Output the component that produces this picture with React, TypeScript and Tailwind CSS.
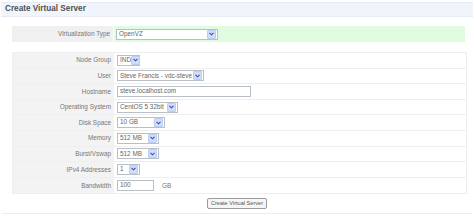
import React from 'react';

function Arrow() {
  return (
    <span className="flex h-[9px] w-[9px] shrink-0 items-center justify-center rounded-[1px] border border-[#bccdf2] bg-[#cfdcfb]">
      <svg width="5" height="4" viewBox="0 0 5 4">
        <path d="M0.5 0.8 L2.5 2.8 L4.5 0.8" stroke="#3550a8" strokeWidth="1.1" fill="none" />
      </svg>
    </span>
  );
}

function Select({ value, width }: { value: string; width: string }) {
  return (
    <div className={`flex h-[11px] items-center justify-between border border-[#b9bfc7] bg-white pl-[2px] pr-[1px] ${width}`}>
      <span className="whitespace-nowrap text-[6.4px] leading-none text-[#666]">{value}</span>
      <Arrow />
    </div>
  );
}

function Input({ value, width }: { value: string; width: string }) {
  return (
    <div className={`flex h-[11px] items-center border border-[#b9bfc7] bg-white pl-[2px] ${width}`}>
      <span className="whitespace-nowrap text-[6.4px] leading-none text-[#666]">{value}</span>
    </div>
  );
}

function Row({ label, children }: { label: string; children: React.ReactNode }) {
  return (
    <div className="flex h-[15.6px] border-b border-[#efefef] last:border-b-0">
      <div className="flex w-[101px] items-center justify-end bg-[#f3f3f3] pr-[3px] text-[6.4px] text-[#777]">{label}</div>
      <div className="flex flex-1 items-center gap-[8px] pl-[3px]">{children}</div>
    </div>
  );
}

export default function App() {
  return (
    <div className="h-[220px] w-[474px] bg-white font-['Liberation_Sans',Arial,sans-serif]">
      <div className="mx-[1px] pt-[2px]">
        <div className="flex h-[15px] items-center border-y border-[#e6ebf3] bg-[#f0f4fb] px-[4px] text-[8.2px] font-semibold text-[#505050]">
          Create Virtual Server
        </div>
      </div>

      <div className="px-[12px] pt-[9px]">
        <div className="flex h-[16px] w-[453px] gap-[1px]">
          <div className="flex w-[101px] items-center justify-end bg-[#f0f0f0] pr-[3px] text-[6.4px] text-[#777]">Virtualization Type</div>
          <div className="flex flex-1 items-center bg-[#e0fbe0] pl-[2px]">
            <Select value="OpenVZ" width="w-[102px]" />
          </div>
        </div>

        <div className="mt-[10px] w-[455px] border border-[#eeeeee]">
          <Row label="Node Group"><Select value="IND" width="w-[23px]" /></Row>
          <Row label="User"><Select value="Steve Francis - vdc-steve" width="w-[87px]" /></Row>
          <Row label="Hostname"><Input value="steve.localhost.com" width="w-[134px]" /></Row>
          <Row label="Operating System"><Select value="CentOS 5 32bit" width="w-[61px]" /></Row>
          <Row label="Disk Space"><Select value="10 GB" width="w-[48px]" /></Row>
          <Row label="Memory"><Select value="512 MB" width="w-[42px]" /></Row>
          <Row label="Burst/Vswap"><Select value="512 MB" width="w-[42px]" /></Row>
          <Row label="IPv4 Addresses"><Select value="1" width="w-[23px]" /></Row>
          <Row label="Bandwidth">
            <Input value="100" width="w-[37px]" />
            <span className="text-[6.4px] text-[#777]">GB</span>
          </Row>
        </div>
      </div>

      <div className="mx-[2px] flex justify-center border-b border-[#ececec] pt-[4px] pb-[4px]">
        <button className="h-[11px] rounded-[2px] border border-[#9a9a9a] bg-[#f6f6f6] px-[3px] text-[5.6px] leading-none text-[#555]">
          Create Virtual Server
        </button>
      </div>
    </div>
  );
}
